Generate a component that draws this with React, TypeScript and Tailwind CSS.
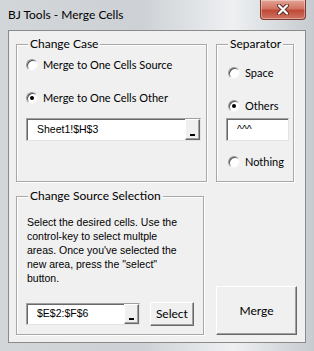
import type { ReactNode } from 'react';

const ui = "font-['Lato','Liberation_Sans',sans-serif]";
const body = "font-['Liberation_Sans',Arial,sans-serif]";

function Radio({ checked, label }: { checked?: boolean; label: string }) {
  return (
    <div className="flex h-[14px] items-center gap-[5px]">
      <span className="flex h-[12px] w-[12px] shrink-0 items-center justify-center rounded-full border border-b-[#f4f4f4] border-l-[#9a9a9a] border-r-[#f4f4f4] border-t-[#9a9a9a] bg-white shadow-[inset_1px_1px_0_#505050]">
        {checked ? <span className="h-[4px] w-[4px] rounded-full bg-black" /> : null}
      </span>
      <span className={`${ui} text-[11px] leading-[14px] text-black`}>{label}</span>
    </div>
  );
}

function Group({ title, className, children }: { title: string; className: string; children: ReactNode }) {
  return (
    <div className={`relative border border-[#a8a8a8] shadow-[inset_1px_1px_0_#fff,1px_1px_0_#fff] ${className}`}>
      <span className={`${ui} absolute -top-[8px] left-[11px] bg-[#f0f0f0] px-[2px] text-[12px] leading-[14px] text-black`}>
        {title}
      </span>
      {children}
    </div>
  );
}

function PickButton() {
  return (
    <span className="flex h-full w-[15px] shrink-0 items-end justify-center border border-b-[#696969] border-l-white border-r-[#696969] border-t-white bg-[#f0f0f0] pb-[3px] shadow-[inset_-1px_-1px_0_#a0a0a0]">
      <span className="h-[2px] w-[5px] bg-black" />
    </span>
  );
}

function Field({ value, className, picker }: { value: string; className: string; picker?: boolean }) {
  return (
    <div
      className={`flex items-stretch border border-b-[#e3e3e3] border-l-[#a0a0a0] border-r-[#e3e3e3] border-t-[#a0a0a0] bg-white shadow-[inset_1px_1px_0_#696969] ${className}`}
    >
      <span className={`${body} flex flex-1 items-center text-[10.5px] text-black`}>{value}</span>
      {picker ? <PickButton /> : null}
    </div>
  );
}

function CloseIcon() {
  return (
    <svg width="12" height="11" viewBox="0 0 12 11">
      <path d="M2 1.5 L10 9.5 M10 1.5 L2 9.5" stroke="#5a2a24" strokeWidth="4" strokeLinecap="round" />
      <path d="M2 1.5 L10 9.5 M10 1.5 L2 9.5" stroke="#fff" strokeWidth="2.2" strokeLinecap="round" />
    </svg>
  );
}

export default function App() {
  return (
    <div className="flex h-[351px] w-[314px] flex-col overflow-hidden bg-[linear-gradient(90deg,#d3d6d9_0%,#cdd1d5_45%,#eef0f2_74%,#c6cbd0_100%)]">
      {/* title bar */}
      <div className="flex h-[30px] shrink-0 items-start justify-between">
        <span className={`${ui} pl-[8px] pt-[7px] text-[12px] leading-[16px] text-black`}>BJ Tools - Merge Cells</span>
        <button
          type="button"
          className="mr-[8px] flex h-[20px] w-[46px] items-center justify-center rounded-b-[4px] border border-t-0 border-[#7b3a30] bg-[linear-gradient(180deg,#e4a497_0%,#d27462_45%,#c04a37_55%,#cf7463_100%)] shadow-[inset_0_0_0_1px_rgba(255,255,255,0.35)]"
        >
          <CloseIcon />
        </button>
      </div>

      {/* client area */}
      <div className="mx-[8px] h-[313px] shrink-0 border border-[#8a8a8a] bg-[#f0f0f0] pl-[7px] pt-[13px]">
        <div className="flex gap-[9px]">
          <Group title="Change Case" className="h-[138px] w-[191px] pl-[9px] pt-[13px]">
            <Radio label="Merge to One Cells Source" />
            <div className="mt-[19px]">
              <Radio checked label="Merge to One Cells Other" />
            </div>
            <Field value="Sheet1!$H$3" picker className="mt-[13px] h-[23px] w-[175px] pl-[10px]" />
          </Group>

          <Group title="Separator" className="h-[138px] w-[78px] pl-[11px] pt-[21px]">
            <Radio label="Space" />
            <div className="mt-[19px]">
              <Radio checked label="Others" />
            </div>
            <Field value="^^^" className="-ml-[2px] mt-[5px] h-[23px] w-[63px] pl-[10px]" />
            <div className="mt-[14px]">
              <Radio label="Nothing" />
            </div>
          </Group>
        </div>

        <div className="mt-[14px] flex items-end gap-[12px]">
          <Group title="Change Source Selection" className="h-[139px] w-[188px] px-[9px] pt-[18px]">
            <p className={`${body} ml-[1px] whitespace-nowrap text-[10.5px] leading-[14px] text-black`}>
              Select the desired cells. Use the
              <br />
              control-key to select multple
              <br />
              areas. Once you&apos;ve selected the
              <br />
              new area, press the &quot;select&quot;
              <br />
              button.
            </p>
            <div className="mt-[17px] flex items-center gap-[10px]">
              <Field value="$E$2:$F$6" picker className="h-[22px] w-[118px] pl-[10px]" />
              <button
                type="button"
                className={`${ui} h-[24px] w-[46px] border border-b-[#696969] border-l-white border-r-[#696969] border-t-white bg-[#f0f0f0] text-[12px] text-black shadow-[inset_-1px_-1px_0_#a0a0a0]`}
              >
                Select
              </button>
            </div>
          </Group>

          <button
            type="button"
            className={`${ui} h-[49px] w-[81px] border border-b-[#696969] border-l-white border-r-[#696969] border-t-white bg-[#f0f0f0] text-[12px] text-black shadow-[inset_-1px_-1px_0_#a0a0a0]`}
          >
            Merge
          </button>
        </div>
      </div>
    </div>
  );
}
